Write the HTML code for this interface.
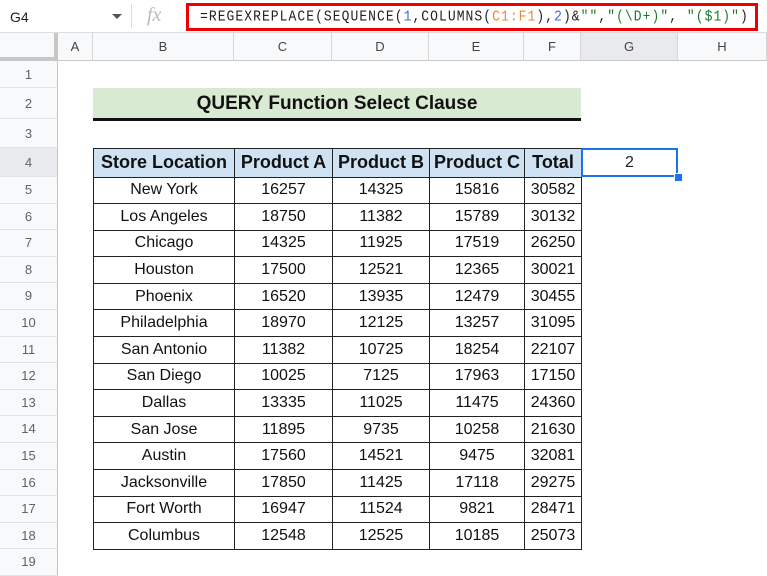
<!DOCTYPE html><html><head><style>
body{margin:0;width:767px;height:575px;overflow:hidden;background:#fff;font-family:"Liberation Sans",Arial,sans-serif;position:relative}
.a{position:absolute}
.rh{position:absolute;left:0;width:58px;background:#f8f9fa;border-bottom:1px solid #e2e3e3;border-right:1px solid #c7c7c7;color:#5f6368;font-size:13px;text-align:center;box-sizing:border-box}
.ch{position:absolute;top:33px;height:28px;line-height:28px;background:#f8f9fa;border-right:1px solid #d6d6d6;border-bottom:1px solid #c7c7c7;color:#444;font-size:13px;text-align:center;box-sizing:border-box}
table{position:absolute;left:93px;top:148px;border-collapse:collapse;font-size:16px;color:#111}
td{border:1.5px solid #222;text-align:center;padding:0;height:25.6px;white-space:nowrap}
th{border:1.5px solid #222;background:#cfe2f3;font-size:18px;font-weight:bold;height:27.5px;padding:0;white-space:nowrap}
</style></head><body>
<div class="a" style="left:0;top:0;width:767px;height:33px;border-bottom:1px solid #ddd;box-sizing:border-box"></div>
<div class="a" style="left:10px;top:9px;font-size:14px;color:#222">G4</div>
<div class="a" style="left:112px;top:14px;width:0;height:0;border-left:5px solid transparent;border-right:5px solid transparent;border-top:5px solid #555"></div>
<div class="a" style="left:131px;top:4px;width:1px;height:24px;background:#ddd"></div>
<div class="a" style="left:147px;top:4px;font-size:20px;font-style:italic;color:#bbb;font-family:'Liberation Serif',serif">fx</div>
<div class="a" style="left:186px;top:3px;width:572px;height:28px;border:3px solid #e00;box-sizing:border-box"></div>
<div class="a" style="left:200px;top:8px;font-size:13px;color:#222;font-family:'Liberation Mono',monospace;letter-spacing:1.05px;transform:scaleY(1.15);transform-origin:0 0;white-space:nowrap">=REGEXREPLACE(SEQUENCE(<span style="color:#3a6ccf">1</span>,COLUMNS(<span style="color:#e8893a">C1:F1</span>),<span style="color:#3a6ccf">2</span>)&amp;<span style="color:#1b7a2e">""</span>,<span style="color:#1b7a2e">"(\D+)"</span>, <span style="color:#1b7a2e">"($1)"</span>)</div>
<div class="a" style="left:0;top:33px;width:58px;height:28px;background:#f8f9fa;border-right:4px solid #c7c7c7;border-bottom:4px solid #c7c7c7;box-sizing:border-box"></div>
<div class="ch" style="left:58px;width:35px">A</div>
<div class="ch" style="left:93px;width:141px">B</div>
<div class="ch" style="left:234px;width:98px">C</div>
<div class="ch" style="left:332px;width:97px">D</div>
<div class="ch" style="left:429px;width:95px">E</div>
<div class="ch" style="left:524px;width:57px">F</div>
<div class="ch" style="left:581px;width:97px;background:#e8eaed">G</div>
<div class="ch" style="left:678px;width:89px">H</div>
<div class="rh" style="top:61px;height:27px;line-height:27px">1</div>
<div class="rh" style="top:88px;height:31px;line-height:31px">2</div>
<div class="rh" style="top:119px;height:29px;line-height:29px">3</div>
<div class="rh" style="top:148px;height:29px;line-height:29px;background:#e8eaed">4</div>
<div class="rh" style="top:177px;height:26.6px;line-height:26px">5</div>
<div class="rh" style="top:203.6px;height:26.6px;line-height:26px">6</div>
<div class="rh" style="top:230.2px;height:26.6px;line-height:26px">7</div>
<div class="rh" style="top:256.8px;height:26.6px;line-height:26px">8</div>
<div class="rh" style="top:283.4px;height:26.6px;line-height:26px">9</div>
<div class="rh" style="top:310px;height:26.6px;line-height:26px">10</div>
<div class="rh" style="top:336.6px;height:26.6px;line-height:26px">11</div>
<div class="rh" style="top:363.2px;height:26.6px;line-height:26px">12</div>
<div class="rh" style="top:389.8px;height:26.6px;line-height:26px">13</div>
<div class="rh" style="top:416.4px;height:26.6px;line-height:26px">14</div>
<div class="rh" style="top:443px;height:26.6px;line-height:26px">15</div>
<div class="rh" style="top:469.6px;height:26.6px;line-height:26px">16</div>
<div class="rh" style="top:496.2px;height:26.6px;line-height:26px">17</div>
<div class="rh" style="top:522.8px;height:26.6px;line-height:26px">18</div>
<div class="rh" style="top:549.4px;height:26.6px;line-height:26px">19</div>
<div class="a" style="left:93px;top:88px;width:488px;height:30px;background:#d9ead3;border-bottom:3px solid #111;text-align:center;line-height:31px;font-size:19px;font-weight:bold;color:#111">QUERY Function Select Clause</div>
<table>
<colgroup><col style="width:141px"><col style="width:98px"><col style="width:97px"><col style="width:95px"><col style="width:57px"></colgroup>
<tr><th>Store Location</th><th>Product A</th><th>Product B</th><th>Product C</th><th>Total</th></tr>
<tr><td>New York</td><td>16257</td><td>14325</td><td>15816</td><td>30582</td></tr>
<tr><td>Los Angeles</td><td>18750</td><td>11382</td><td>15789</td><td>30132</td></tr>
<tr><td>Chicago</td><td>14325</td><td>11925</td><td>17519</td><td>26250</td></tr>
<tr><td>Houston</td><td>17500</td><td>12521</td><td>12365</td><td>30021</td></tr>
<tr><td>Phoenix</td><td>16520</td><td>13935</td><td>12479</td><td>30455</td></tr>
<tr><td>Philadelphia</td><td>18970</td><td>12125</td><td>13257</td><td>31095</td></tr>
<tr><td>San Antonio</td><td>11382</td><td>10725</td><td>18254</td><td>22107</td></tr>
<tr><td>San Diego</td><td>10025</td><td>7125</td><td>17963</td><td>17150</td></tr>
<tr><td>Dallas</td><td>13335</td><td>11025</td><td>11475</td><td>24360</td></tr>
<tr><td>San Jose</td><td>11895</td><td>9735</td><td>10258</td><td>21630</td></tr>
<tr><td>Austin</td><td>17560</td><td>14521</td><td>9475</td><td>32081</td></tr>
<tr><td>Jacksonville</td><td>17850</td><td>11425</td><td>17118</td><td>29275</td></tr>
<tr><td>Fort Worth</td><td>16947</td><td>11524</td><td>9821</td><td>28471</td></tr>
<tr><td>Columbus</td><td>12548</td><td>12525</td><td>10185</td><td>25073</td></tr>
</table>
<div class="a" style="left:581px;top:148px;width:97px;height:29px;border:2px solid #1a73e8;box-sizing:border-box;text-align:center;line-height:26px;font-size:16px;color:#222">2</div>
<div class="a" style="left:674px;top:173px;width:7px;height:7px;background:#1a73e8;border:1px solid #fff"></div>
</body></html>
